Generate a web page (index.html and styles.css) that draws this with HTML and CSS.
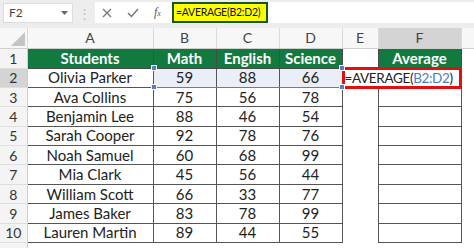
FILE: index.html
```html
<!DOCTYPE html>
<html lang="en">
<head>
    <meta charset="UTF-8">
    <meta name="viewport" content="width=device-width, initial-scale=1.0">
    <title>AVERAGE formula</title>
    <link rel="stylesheet" href="styles.css">
</head>
<body>
    <div class="toolbar">
        <div class="namebox">
            <span>F2</span>
            <svg class="arrow" width="7" height="4" viewBox="0 0 7 4"><path d="M0 0 L7 0 L3.5 4 Z" fill="#666"/></svg>
        </div>
        <div class="dots">⋮</div>
        <div class="formula">
            <svg class="icon" width="10" height="10" viewBox="0 0 10 10"><path d="M1 1 L9 9 M9 1 L1 9" stroke="#777" stroke-width="1.3"/></svg>
            <svg class="icon" width="12" height="10" viewBox="0 0 12 10"><path d="M1 5 L4.5 8.5 L11 1" stroke="#777" stroke-width="1.5" fill="none"/></svg>
            <span class="fx">f<small>x</small></span>
            <div class="input">=AVERAGE(B2:D2)</div>
        </div>
    </div>

    <div class="sheet">
        <table>
            <colgroup>
                <col class="c-row">
                <col class="c-a">
                <col class="c-num">
                <col class="c-num">
                <col class="c-num">
                <col class="c-e">
                <col class="c-f">
                <col>
            </colgroup>
            <tr class="heads">
                <th class="corner"><span class="tri"></span></th>
                <th>A</th><th>B</th><th>C</th><th>D</th><th>E</th><th class="on">F</th><th class="rest"></th>
            </tr>
            <tr class="top">
                <th class="rownum">1</th>
                <td class="hd">Students</td><td class="hd">Math</td><td class="hd">English</td><td class="hd">Science</td>
                <td class="blank"></td><td class="hd">Average</td><td class="blank"></td>
            </tr>
            <tr>
                <th class="rownum on">2</th>
                <td class="cell">Olivia Parker</td>
                <td class="cell ref ref-l">59</td><td class="cell ref">88</td><td class="cell ref ref-r">66</td>
                <td class="blank"></td>
                <td class="cell edit"><div class="editbox">=AVERAGE(<span class="blue">B2:D2</span>)</div></td>
                <td class="blank"></td>
            </tr>
            <tr><th class="rownum">3</th><td class="cell">Ava Collins</td><td class="cell">75</td><td class="cell">56</td><td class="cell">78</td><td class="blank"></td><td class="cell"></td><td class="blank"></td></tr>
            <tr><th class="rownum">4</th><td class="cell">Benjamin Lee</td><td class="cell">88</td><td class="cell">46</td><td class="cell">54</td><td class="blank"></td><td class="cell"></td><td class="blank"></td></tr>
            <tr><th class="rownum">5</th><td class="cell">Sarah Cooper</td><td class="cell">92</td><td class="cell">78</td><td class="cell">76</td><td class="blank"></td><td class="cell"></td><td class="blank"></td></tr>
            <tr><th class="rownum">6</th><td class="cell">Noah Samuel</td><td class="cell">60</td><td class="cell">68</td><td class="cell">99</td><td class="blank"></td><td class="cell"></td><td class="blank"></td></tr>
            <tr><th class="rownum">7</th><td class="cell">Mia Clark</td><td class="cell">45</td><td class="cell">56</td><td class="cell">44</td><td class="blank"></td><td class="cell"></td><td class="blank"></td></tr>
            <tr><th class="rownum">8</th><td class="cell">William Scott</td><td class="cell">66</td><td class="cell">33</td><td class="cell">77</td><td class="blank"></td><td class="cell"></td><td class="blank"></td></tr>
            <tr><th class="rownum">9</th><td class="cell">James Baker</td><td class="cell">83</td><td class="cell">78</td><td class="cell">99</td><td class="blank"></td><td class="cell"></td><td class="blank"></td></tr>
            <tr><th class="rownum">10</th><td class="cell">Lauren Martin</td><td class="cell">89</td><td class="cell">44</td><td class="cell">55</td><td class="blank"></td><td class="cell"></td><td class="blank"></td></tr>
            <tr><th class="rownum"></th><td class="blank"></td><td class="blank"></td><td class="blank"></td><td class="blank"></td><td class="blank"></td><td class="blank"></td><td class="blank"></td></tr>
        </table>
        <span class="handle h1"></span>
        <span class="handle h2"></span>
        <span class="handle h3"></span>
        <span class="handle h4"></span>
    </div>
</body>
</html>
```

FILE: styles.css
```css
body {
    margin: 0;
    padding: 0;
    width: 474px;
    height: 248px;
    overflow: hidden;
    background-color: #ffffff;
    font-family: Lato, "Open Sans", sans-serif;
}
.toolbar {
    display: flex;
    align-items: center;
    height: 28px;
    padding: 0 0 3px 3px;
    background-color: #ededed;
    box-sizing: border-box;
}
.namebox {
    display: flex;
    align-items: center;
    justify-content: space-between;
    width: 70px;
    height: 20px;
    padding: 0 4px 0 5px;
    box-sizing: border-box;
    background-color: #fff;
    border: 1px solid #dcdcdc;
    font-size: 12px;
    color: #444;
}
.dots {
    width: 22px;
    text-align: center;
    color: #c2c2c2;
    font-size: 13px;
}
.formula {
    flex: 1;
    display: flex;
    align-items: center;
    height: 21px;
    background-color: #fff;
    padding-left: 7px;
}
.icon {
    margin-right: 15px;
}
.fx {
    font-family: "Liberation Serif", serif;
    font-style: italic;
    font-size: 12px;
    color: #555;
    margin-right: 11px;
}
.fx small {
    font-size: 8px;
}
.input {
    height: 21px;
    width: 96px;
    box-sizing: border-box;
    border: 2px solid #14562a;
    background-color: #ffff00;
    font-family: Lato, sans-serif;
    font-size: 10.5px;
    letter-spacing: -0.25px;
    line-height: 17px;
    padding-left: 2px;
    color: #111;
    white-space: nowrap;
    overflow: hidden;
}
.sheet {
    position: relative;
}
table {
    border-collapse: collapse;
    table-layout: fixed;
    width: 474px;
}
.c-row { width: 27px; }
.c-a { width: 126px; }
.c-num { width: 63px; }
.c-e { width: 36px; }
.c-f { width: 83px; }
tr {
    height: 19.4px;
}
tr.heads, tr.top {
    height: 20px;
}
th, td {
    padding: 0;
    text-align: center;
    white-space: nowrap;
    line-height: 15px;
}
.heads th {
    background-color: #f7f7f7;
    border-right: 1px solid #dadada;
    border-bottom: 1px solid #cfcfcf;
    font-weight: normal;
    font-size: 14px;
    color: #444;
}
.heads th.on {
    background-color: #d4d4d4;
}
.heads th.rest {
    border-right: none;
}
.corner {
    position: relative;
}
.tri {
    position: absolute;
    right: 2px;
    bottom: 2px;
    width: 0;
    height: 0;
    border-left: 14px solid transparent;
    border-bottom: 14px solid #c4c4c4;
}
.rownum {
    background-color: #f4f4f4;
    border-right: 1px solid #cfcfcf;
    border-bottom: 1px solid #dedede;
    font-weight: normal;
    font-size: 14px;
    color: #333;
}
.rownum.on {
    background-color: #d4d4d4;
}
.hd {
    background-color: #137a3f;
    color: #fff;
    font-weight: bold;
    font-size: 15px;
    border: 1px solid #4a4a4a;
}
.cell {
    border: 1px solid #555;
    font-size: 15px;
    color: #222;
}
.ref {
    background-color: #e9eef7;
    border-top: 1px solid #5b7ec2;
    border-bottom: 1px solid #5b7ec2;
}
.ref-l {
    border-left: 1px solid #5b7ec2;
}
.ref-r {
    border-right: 1px solid #5b7ec2;
}
.edit {
    position: relative;
}
.editbox {
    position: absolute;
    top: -2px;
    bottom: -2px;
    right: -1px;
    width: 120px;
    box-sizing: border-box;
    border: 3px solid #e01010;
    background-color: #fff;
    text-align: left;
    font-size: 13.5px;
    line-height: 17px;
    letter-spacing: -0.35px;
    color: #222;
    overflow: hidden;
}
.blue {
    color: #4a7cc7;
}
.blank {
    border: none;
}
.handle {
    position: absolute;
    width: 4px;
    height: 4px;
    background-color: #5b7ec2;
    border: 1px solid #fff;
}
.h1 { left: 151px; top: 37px; }
.h2 { left: 151px; top: 56px; }
.h3 { left: 339px; top: 37px; }
.h4 { left: 339px; top: 56px; }
```
